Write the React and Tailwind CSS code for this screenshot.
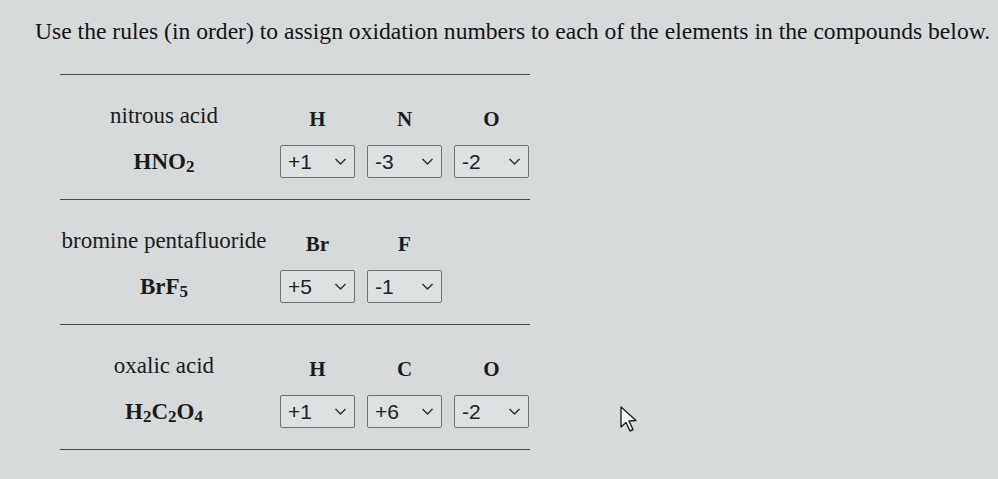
import React from "react";

const compounds = [
  {
    name: "nitrous acid",
    formula: [["H"], ["NO", "2"]],
    elements: ["H", "N", "O"],
    values: ["+1", "-3", "-2"],
  },
  {
    name: "bromine pentafluoride",
    formula: [["BrF", "5"]],
    elements: ["Br", "F"],
    values: ["+5", "-1"],
  },
  {
    name: "oxalic acid",
    formula: [["H", "2"], ["C", "2"], ["O", "4"]],
    elements: ["H", "C", "O"],
    values: ["+1", "+6", "-2"],
  },
];

const Chevron = () => (
  <svg width="13" height="9" viewBox="0 0 13 9" className="shrink-0">
    <path d="M1.5 2 L6.5 7 L11.5 2" fill="none" stroke="#333" strokeWidth="1.5" />
  </svg>
);

const Select = ({ value }) => (
  <div className="flex items-center justify-between h-[33px] w-[75px] pl-[7px] pr-[7px] border border-[#6f7373] rounded-[2px] bg-[#dde1e1] font-['Liberation_Sans',Arial,sans-serif] text-[21px] text-[#222]">
    <span>{value}</span>
    <Chevron />
  </div>
);

const Formula = ({ parts }) => (
  <span className="font-bold text-[23px] text-[#1a1a1a]">
    {parts.map(([t, sub], i) => (
      <React.Fragment key={i}>
        {t}
        {sub && <sub className="text-[17px] relative top-[3px]">{sub}</sub>}
      </React.Fragment>
    ))}
  </span>
);

const Row = ({ c }) => (
  <div className="border-t-[1.5px] border-[#4a4d4d] pt-[29px] pb-[21px]">
    <div className="grid grid-cols-[208px_75px_75px_75px] gap-x-[12px] gap-y-[17px] items-center">
      <div className="text-center text-[23px] text-[#1c1c1c] h-[24px] leading-[24px] whitespace-nowrap">{c.name}</div>
      {c.elements.map((e, i) => (
        <div key={i} className="text-center font-bold text-[21px] text-[#1c1c1c] h-[24px] leading-[24px] pt-[3px]">
          {e}
        </div>
      ))}
      {c.elements.length < 3 && <div />}
      <div className="text-center h-[33px] leading-[33px]">
        <Formula parts={c.formula} />
      </div>
      {c.values.map((v, i) => (
        <Select key={i} value={v} />
      ))}
    </div>
  </div>
);

const App = () => {
  return (
    <div className="relative w-[998px] h-[479px] overflow-hidden bg-[#d6dada] font-['Liberation_Serif','Times_New_Roman',serif]">
      <h1 className="pl-[35px] pt-[18px] text-[23.6px] leading-[26px] text-[#141414] whitespace-nowrap">
        Use the rules (in order) to assign oxidation numbers to each of the elements in the compounds below.
      </h1>
      <div className="ml-[60px] mt-[30px] w-[470px]">
        {compounds.map((c, i) => (
          <Row key={i} c={c} />
        ))}
        <div className="border-t-[1.5px] border-[#4a4d4d]" />
      </div>
      {/* mouse pointer */}
      <svg className="absolute left-[618px] top-[405px]" width="24" height="30" viewBox="0 0 24 30">
        <path
          d="M3 2 L3 22 L8 17.5 L12 26 L15 24.5 L11 16 L18 15.5 Z"
          fill="#f4f6f6"
          stroke="#222"
          strokeWidth="1.4"
          strokeLinejoin="round"
        />
      </svg>
    </div>
  );
};

export default App;
